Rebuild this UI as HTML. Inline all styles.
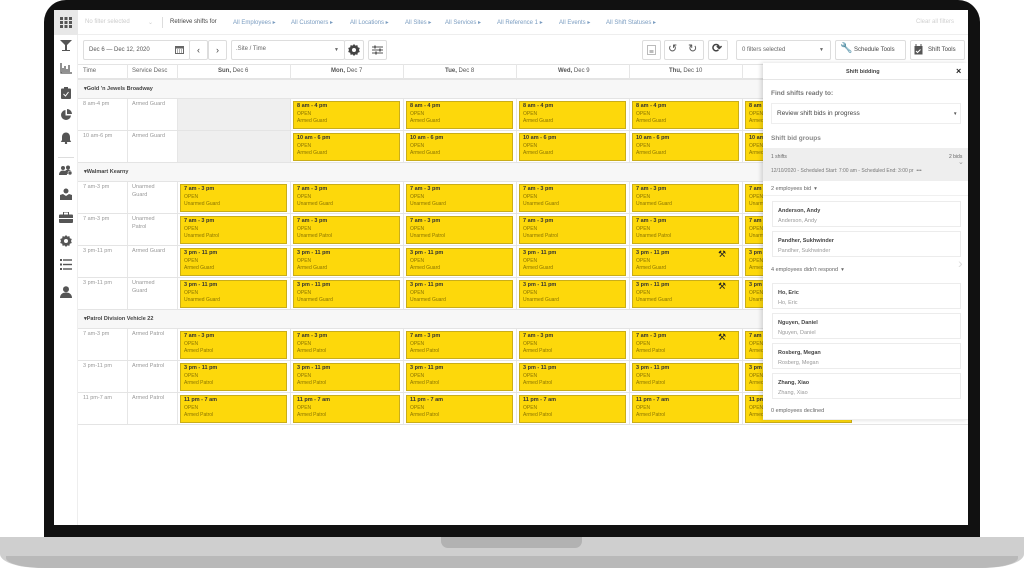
<!DOCTYPE html>
<html><head><meta charset="utf-8"><style>
*{margin:0;padding:0;box-sizing:border-box}
body{width:1024px;height:568px;background:#fff;position:relative;overflow:hidden;font-family:"Liberation Sans",sans-serif;color:#666}
.a{position:absolute}
#bez{left:44px;top:0;width:936px;height:538px;background:#111;border-radius:22px 22px 0 0}
#base{left:0;top:537px;width:1024px;height:31px;background:#cfcfcf;border-radius:0 0 40px 40px/0 0 14px 14px}
#base2{left:6px;top:556px;width:1012px;height:12px;background:#b9b9b9;border-radius:0 0 40px 40px/0 0 10px 10px}
#notch{left:441px;top:537px;width:141px;height:11px;background:#b2b2b2;border-radius:0 0 7px 7px}
#scr{left:54px;top:10px;width:914px;height:515px;background:#fff;overflow:hidden}
.t{position:absolute;white-space:nowrap;font-size:6px}
.lnk{color:#7a9cc0}
.box{position:absolute;border:1px solid #ddd;background:#fff;border-radius:2px}
.c{position:absolute;width:107px;height:28px;background:#fdd80b;border:1px solid #c9ad1a;font-size:5px;line-height:7.6px;padding:1px 3px;color:#8a7400}
.c b{color:#333;font-size:5.5px}
.hl{position:absolute;height:1px;background:#e4e4e4;left:24px;width:890px}
.vl{position:absolute;width:1px;background:#e6e6e6}
.g{position:absolute;left:24px;width:890px;height:19px;background:#f7f7f7;font-size:5.5px;font-weight:bold;color:#444;padding:6px 6px;border-top:1px solid #e4e4e4}
.rt{position:absolute;font-size:5.5px;color:#999;line-height:8px}
.pc{position:absolute;left:9px;width:189px;height:26px;border:1px solid #ececec;background:#fff;padding:4px 5px;font-size:5.5px;line-height:10px}
.pc b{color:#444}
.pc span{color:#999}
</style></head><body>
<div class="a" id="bez"></div>
<div class="a" id="base"></div><div class="a" id="base2"></div><div class="a" id="notch"></div>
<div class="a" id="scr">
 <!-- sidebar -->
 <div class="a" style="left:0;top:0;width:24px;height:515px;background:#fff;border-right:1px solid #eee"></div>
 <div class="a" style="left:0;top:0;width:24px;height:25px;background:#e8e8e8"></div>
 <svg class="a" style="left:6px;top:7px" width="12" height="11" viewBox="0 0 12 11"><g fill="#555"><rect x="0" y="0" width="3" height="3"/><rect x="4.5" y="0" width="3" height="3"/><rect x="9" y="0" width="3" height="3"/><rect x="0" y="4" width="3" height="3"/><rect x="4.5" y="4" width="3" height="3"/><rect x="9" y="4" width="3" height="3"/><rect x="0" y="8" width="3" height="3"/><rect x="4.5" y="8" width="3" height="3"/><rect x="9" y="8" width="3" height="3"/></g></svg>
 <svg class="a" style="left:6px;top:30px" width="12" height="11"><path d="M0 0h12L7 5v5h3v1H2v-1h3V5z" fill="#555"/></svg>
 <svg class="a" style="left:6px;top:53px" width="12" height="11"><path d="M1 0v10h11" stroke="#555" fill="none" stroke-width="1.3"/><path d="M3 9V5M5 9V3M7 9V6M9 9V2" stroke="#555" stroke-width="1.3"/></svg>
 <svg class="a" style="left:7px;top:77px" width="10" height="12"><rect x="0" y="1.5" width="10" height="10.5" rx="1" fill="#555"/><rect x="3" y="0" width="4" height="3" fill="#555"/><path d="M2.5 7l2 2 3-4" stroke="#fff" fill="none"/></svg>
 <svg class="a" style="left:6px;top:99px" width="12" height="12"><path d="M5.5 1A5 5 0 1 0 11 6.5H5.5z" fill="#555"/><path d="M7 0v5h5A5 5 0 0 0 7 0z" fill="#555"/></svg>
 <svg class="a" style="left:6px;top:122px" width="12" height="12"><path d="M6 0.5c-2.5 0-4 2-4 4.5v3L0.8 10h10.4L10 8V5c0-2.5-1.5-4.5-4-4.5z" fill="#555"/><circle cx="6" cy="11" r="1.2" fill="#555"/></svg>
 <div class="a" style="left:4px;top:147px;width:16px;height:1px;background:#ddd"></div>
 <svg class="a" style="left:5px;top:155px" width="14" height="11"><circle cx="4" cy="3" r="2" fill="#555"/><circle cx="9" cy="2.5" r="2" fill="#555"/><path d="M0 10c0-3 2-4.5 4-4.5s4 1.5 4 4.5zM6 6c1-1 2-1.5 3-1.5 2 0 4 1.5 4 4.5H8" fill="#555"/><circle cx="11" cy="8" r="2" fill="#555" stroke="#fff" stroke-width=".6"/></svg>
 <svg class="a" style="left:5px;top:178px" width="14" height="12"><circle cx="7" cy="3" r="2.5" fill="#555"/><path d="M1 12V7l3-1 3 2 3-2 3 1v5z" fill="#555"/></svg>
 <svg class="a" style="left:5px;top:202px" width="14" height="11"><rect x="0" y="2.5" width="14" height="8.5" rx="1" fill="#555"/><rect x="4.5" y="0" width="5" height="3.5" fill="none" stroke="#555"/><rect x="0" y="6" width="14" height="1" fill="#fff"/></svg>
 <svg class="a" style="left:6px;top:225px" width="12" height="12"><path d="M6 0l1.4 1.6 2-.5.4 2.1 2 .8-.8 2 .8 2-2 .8-.4 2.1-2-.5L6 12l-1.4-1.6-2 .5-.4-2.1-2-.8.8-2-.8-2 2-.8.4-2.1 2 .5z" fill="#555"/><circle cx="6" cy="6" r="2" fill="#fff"/></svg>
 <svg class="a" style="left:6px;top:249px" width="12" height="11"><g fill="#555"><rect x="0" y="0" width="2" height="2"/><rect x="3" y="0.3" width="9" height="1.4"/><rect x="0" y="4.5" width="2" height="2"/><rect x="3" y="4.8" width="9" height="1.4"/><rect x="0" y="9" width="2" height="2"/><rect x="3" y="9.3" width="9" height="1.4"/></g></svg>
 <svg class="a" style="left:6px;top:276px" width="12" height="12"><circle cx="6" cy="3.2" r="3" fill="#555"/><path d="M0 12c0-4 3-5.5 6-5.5s6 1.5 6 5.5z" fill="#555"/></svg>

 <!-- filter bar -->
 <div class="a" style="left:24px;top:0;width:890px;height:25px;border-bottom:1px solid #eee"></div>
 <div class="t" style="left:31px;top:9px;color:#ccc">No filter selected</div>
 <div class="t" style="left:94px;top:9px;color:#ccc">⌄</div>
 <div class="a" style="left:108px;top:7px;width:1px;height:11px;background:#ddd"></div>
 <div class="t" style="left:116px;top:9px;color:#444">Retrieve shifts for</div>
 <div class="t lnk" style="left:179px;top:9px">All Employees ▸</div>
 <div class="t lnk" style="left:237px;top:9px">All Customers ▸</div>
 <div class="t lnk" style="left:296px;top:9px">All Locations ▸</div>
 <div class="t lnk" style="left:351px;top:9px">All Sites ▸</div>
 <div class="t lnk" style="left:391px;top:9px">All Services ▸</div>
 <div class="t lnk" style="left:443px;top:9px">All Reference 1 ▸</div>
 <div class="t lnk" style="left:505px;top:9px">All Events ▸</div>
 <div class="t lnk" style="left:552px;top:9px">All Shift Statuses ▸</div>
 <div class="t" style="left:862px;top:9px;color:#d0d0d0">Clear all filters</div>

 <!-- toolbar -->
 <div class="box" style="left:29px;top:30px;width:107px;height:20px"></div>
 <div class="t" style="left:35px;top:37px;color:#555">Dec 6 — Dec 12, 2020</div>
 <svg class="a" style="left:121px;top:35px" width="9" height="9"><rect x=".5" y="1.5" width="8" height="7" fill="none" stroke="#666"/><rect x=".5" y="1.5" width="8" height="2" fill="#666"/><path d="M2 5h1M4 5h1M6 5h1M2 7h1M4 7h1M6 7h1" stroke="#666"/></svg>
 <div class="box" style="left:135px;top:30px;width:19px;height:20px;font-size:9px;color:#444;text-align:center;line-height:18px">‹</div>
 <div class="box" style="left:154px;top:30px;width:19px;height:20px;font-size:9px;color:#444;text-align:center;line-height:18px">›</div>
 <div class="box" style="left:177px;top:30px;width:114px;height:20px"></div>
 <div class="t" style="left:182px;top:36px;color:#666">.Site / Time</div>
 <div class="t" style="left:280px;top:37px;color:#666;font-size:5px">▼</div>
 <div class="box" style="left:290px;top:30px;width:20px;height:20px"></div>
 <svg class="a" style="left:294px;top:34px" width="12" height="12" viewBox="0 0 12 12"><path d="M6 0l1.4 1.6 2-.5.4 2.1 2 .8-.8 2 .8 2-2 .8-.4 2.1-2-.5L6 12l-1.4-1.6-2 .5-.4-2.1-2-.8.8-2-.8-2 2-.8.4-2.1 2 .5z" fill="#444"/><circle cx="6" cy="6" r="2" fill="#fff"/></svg>
 <div class="box" style="left:314px;top:30px;width:19px;height:20px"></div>
 <svg class="a" style="left:318px;top:35px" width="11" height="10"><path d="M0 2h11M0 5h11M0 8h11" stroke="#555"/><path d="M3 0.5v3M8 3.5v3M4 6.5v3" stroke="#555" stroke-width="1.5"/></svg>
 <div class="box" style="left:588px;top:30px;width:19px;height:20px"></div>
 <svg class="a" style="left:593px;top:35px" width="9" height="10"><rect x=".5" y=".5" width="8" height="9" fill="none" stroke="#bbb"/><rect x="2.5" y="5" width="4" height="3" fill="#bbb"/></svg>
 <div class="box" style="left:610px;top:30px;width:40px;height:20px"></div>
 <div class="t" style="left:614px;top:32px;font-size:11px;color:#555">↺</div>
 <div class="t" style="left:634px;top:32px;font-size:11px;color:#555">↻</div>
 <div class="box" style="left:654px;top:30px;width:20px;height:20px"></div>
 <div class="t" style="left:658px;top:31px;font-size:12px;color:#444;font-weight:bold">⟳</div>
 <div class="box" style="left:682px;top:30px;width:95px;height:20px"></div>
 <div class="t" style="left:688px;top:37px;color:#666">0 filters selected</div>
 <div class="t" style="left:765px;top:37px;color:#666;font-size:5px">▼</div>
 <div class="box" style="left:781px;top:30px;width:71px;height:20px"></div>
 <div class="t" style="left:786px;top:33px;font-size:10px;color:#444">🔧</div>
 <div class="t" style="left:800px;top:37px;color:#444">Schedule Tools</div>
 <div class="box" style="left:856px;top:30px;width:55px;height:20px"></div>
 <svg class="a" style="left:860px;top:34px" width="9" height="11"><rect x=".5" y="2" width="8" height="8.5" fill="#555"/><path d="M2 0v3M7 0v3" stroke="#555"/><path d="M2 7l1.5 1.5 3-3" stroke="#fff" fill="none"/></svg>
 <div class="t" style="left:874px;top:37px;color:#444">Shift Tools</div>

 <!-- grid header -->
 <div class="a" style="left:24px;top:54px;width:890px;height:15px;border-top:1px solid #e4e4e4;border-bottom:1px solid #e4e4e4"></div>
 <div class="t" style="left:29px;top:58px">Time</div>
 <div class="t" style="left:78px;top:58px">Service Desc</div>
 <div class="t" style="left:164px;top:58px;color:#555"><b>Sun,</b> Dec 6</div>
 <div class="t" style="left:277px;top:58px;color:#555"><b>Mon,</b> Dec 7</div>
 <div class="t" style="left:391px;top:58px;color:#555"><b>Tue,</b> Dec 8</div>
 <div class="t" style="left:504px;top:58px;color:#555"><b>Wed,</b> Dec 9</div>
 <div class="t" style="left:615px;top:58px;color:#555"><b>Thu,</b> Dec 10</div>

 <div class="a" style="left:124px;top:88px;width:112px;height:64px;background:#efefef"></div>
 <!-- vertical lines -->
 <div class="vl" style="left:73px;top:54px;height:360px"></div>
 <div class="vl" style="left:123px;top:54px;height:360px"></div>
 <div class="vl" style="left:236px;top:54px;height:360px"></div>
 <div class="vl" style="left:349px;top:54px;height:360px"></div>
 <div class="vl" style="left:462px;top:54px;height:360px"></div>
 <div class="vl" style="left:575px;top:54px;height:360px"></div>
 <div class="vl" style="left:688px;top:54px;height:360px"></div>
 <!-- horizontal lines -->
 <div class="hl" style="top:120px"></div>
 <div class="hl" style="top:203px"></div><div class="hl" style="top:235px"></div><div class="hl" style="top:267px"></div>
 <div class="hl" style="top:350px"></div><div class="hl" style="top:382px"></div><div class="hl" style="top:414px"></div>
 <!-- group rows -->
 <div class="g" style="top:69px">▾Gold 'n Jewels Broadway</div>
 <div class="g" style="top:152px">▾Walmart Kearny</div>
 <div class="g" style="top:299px">▾Patrol Division Vehicle 22</div>
 <div class="hl" style="top:88px"></div><div class="hl" style="top:171px"></div><div class="hl" style="top:318px"></div>

 <!-- row labels -->
 <div class="rt" style="left:29px;top:90px">8 am-4 pm</div><div class="rt" style="left:78px;top:90px">Armed Guard</div>
 <div class="rt" style="left:29px;top:122px">10 am-6 pm</div><div class="rt" style="left:78px;top:122px">Armed Guard</div>
 <div class="rt" style="left:29px;top:173px">7 am-3 pm</div><div class="rt" style="left:78px;top:173px">Unarmed<br>Guard</div>
 <div class="rt" style="left:29px;top:205px">7 am-3 pm</div><div class="rt" style="left:78px;top:205px">Unarmed<br>Patrol</div>
 <div class="rt" style="left:29px;top:237px">3 pm-11 pm</div><div class="rt" style="left:78px;top:237px">Armed Guard</div>
 <div class="rt" style="left:29px;top:269px">3 pm-11 pm</div><div class="rt" style="left:78px;top:269px">Unarmed<br>Guard</div>
 <div class="rt" style="left:29px;top:320px">7 am-3 pm</div><div class="rt" style="left:78px;top:320px">Armed Patrol</div>
 <div class="rt" style="left:29px;top:352px">3 pm-11 pm</div><div class="rt" style="left:78px;top:352px">Armed Patrol</div>
 <div class="rt" style="left:29px;top:384px">11 pm-7 am</div><div class="rt" style="left:78px;top:384px">Armed Patrol</div>

 <!-- cards: Gold -->
 <div class="c" style="left:239px;top:91px"><b>8 am - 4 pm</b><br>OPEN<br>Armed Guard</div>
 <div class="c" style="left:352px;top:91px"><b>8 am - 4 pm</b><br>OPEN<br>Armed Guard</div>
 <div class="c" style="left:465px;top:91px"><b>8 am - 4 pm</b><br>OPEN<br>Armed Guard</div>
 <div class="c" style="left:578px;top:91px"><b>8 am - 4 pm</b><br>OPEN<br>Armed Guard</div>
 <div class="c" style="left:691px;top:91px"><b>8 am - 4 pm</b><br>OPEN<br>Armed Guard</div>
 <div class="c" style="left:239px;top:123px"><b>10 am - 6 pm</b><br>OPEN<br>Armed Guard</div>
 <div class="c" style="left:352px;top:123px"><b>10 am - 6 pm</b><br>OPEN<br>Armed Guard</div>
 <div class="c" style="left:465px;top:123px"><b>10 am - 6 pm</b><br>OPEN<br>Armed Guard</div>
 <div class="c" style="left:578px;top:123px"><b>10 am - 6 pm</b><br>OPEN<br>Armed Guard</div>
 <div class="c" style="left:691px;top:123px"><b>10 am - 6 pm</b><br>OPEN<br>Armed Guard</div>
 <!-- Walmart -->
 <div class="c" style="left:126px;top:174px"><b>7 am - 3 pm</b><br>OPEN<br>Unarmed Guard</div>
 <div class="c" style="left:239px;top:174px"><b>7 am - 3 pm</b><br>OPEN<br>Unarmed Guard</div>
 <div class="c" style="left:352px;top:174px"><b>7 am - 3 pm</b><br>OPEN<br>Unarmed Guard</div>
 <div class="c" style="left:465px;top:174px"><b>7 am - 3 pm</b><br>OPEN<br>Unarmed Guard</div>
 <div class="c" style="left:578px;top:174px"><b>7 am - 3 pm</b><br>OPEN<br>Unarmed Guard</div>
 <div class="c" style="left:691px;top:174px"><b>7 am - 3 pm</b><br>OPEN<br>Unarmed Guard</div>
 <div class="c" style="left:126px;top:206px"><b>7 am - 3 pm</b><br>OPEN<br>Unarmed Patrol</div>
 <div class="c" style="left:239px;top:206px"><b>7 am - 3 pm</b><br>OPEN<br>Unarmed Patrol</div>
 <div class="c" style="left:352px;top:206px"><b>7 am - 3 pm</b><br>OPEN<br>Unarmed Patrol</div>
 <div class="c" style="left:465px;top:206px"><b>7 am - 3 pm</b><br>OPEN<br>Unarmed Patrol</div>
 <div class="c" style="left:578px;top:206px"><b>7 am - 3 pm</b><br>OPEN<br>Unarmed Patrol</div>
 <div class="c" style="left:691px;top:206px"><b>7 am - 3 pm</b><br>OPEN<br>Unarmed Patrol</div>
 <div class="c" style="left:126px;top:238px"><b>3 pm - 11 pm</b><br>OPEN<br>Armed Guard</div>
 <div class="c" style="left:239px;top:238px"><b>3 pm - 11 pm</b><br>OPEN<br>Armed Guard</div>
 <div class="c" style="left:352px;top:238px"><b>3 pm - 11 pm</b><br>OPEN<br>Armed Guard</div>
 <div class="c" style="left:465px;top:238px"><b>3 pm - 11 pm</b><br>OPEN<br>Armed Guard</div>
 <div class="c" style="left:578px;top:238px"><b>3 pm - 11 pm</b><br>OPEN<br>Armed Guard</div>
 <div class="c" style="left:691px;top:238px"><b>3 pm - 11 pm</b><br>OPEN<br>Armed Guard</div>
 <div class="c" style="left:126px;top:270px"><b>3 pm - 11 pm</b><br>OPEN<br>Unarmed Guard</div>
 <div class="c" style="left:239px;top:270px"><b>3 pm - 11 pm</b><br>OPEN<br>Unarmed Guard</div>
 <div class="c" style="left:352px;top:270px"><b>3 pm - 11 pm</b><br>OPEN<br>Unarmed Guard</div>
 <div class="c" style="left:465px;top:270px"><b>3 pm - 11 pm</b><br>OPEN<br>Unarmed Guard</div>
 <div class="c" style="left:578px;top:270px"><b>3 pm - 11 pm</b><br>OPEN<br>Unarmed Guard</div>
 <div class="c" style="left:691px;top:270px"><b>3 pm - 11 pm</b><br>OPEN<br>Unarmed Guard</div>
 <!-- Patrol -->
 <div class="c" style="left:126px;top:321px"><b>7 am - 3 pm</b><br>OPEN<br>Armed Patrol</div>
 <div class="c" style="left:239px;top:321px"><b>7 am - 3 pm</b><br>OPEN<br>Armed Patrol</div>
 <div class="c" style="left:352px;top:321px"><b>7 am - 3 pm</b><br>OPEN<br>Armed Patrol</div>
 <div class="c" style="left:465px;top:321px"><b>7 am - 3 pm</b><br>OPEN<br>Armed Patrol</div>
 <div class="c" style="left:578px;top:321px"><b>7 am - 3 pm</b><br>OPEN<br>Armed Patrol</div>
 <div class="c" style="left:691px;top:321px"><b>7 am - 3 pm</b><br>OPEN<br>Armed Patrol</div>
 <div class="c" style="left:126px;top:353px"><b>3 pm - 11 pm</b><br>OPEN<br>Armed Patrol</div>
 <div class="c" style="left:239px;top:353px"><b>3 pm - 11 pm</b><br>OPEN<br>Armed Patrol</div>
 <div class="c" style="left:352px;top:353px"><b>3 pm - 11 pm</b><br>OPEN<br>Armed Patrol</div>
 <div class="c" style="left:465px;top:353px"><b>3 pm - 11 pm</b><br>OPEN<br>Armed Patrol</div>
 <div class="c" style="left:578px;top:353px"><b>3 pm - 11 pm</b><br>OPEN<br>Armed Patrol</div>
 <div class="c" style="left:691px;top:353px"><b>3 pm - 11 pm</b><br>OPEN<br>Armed Patrol</div>
 <div class="c" style="left:126px;top:385px"><b>11 pm - 7 am</b><br>OPEN<br>Armed Patrol</div>
 <div class="c" style="left:239px;top:385px"><b>11 pm - 7 am</b><br>OPEN<br>Armed Patrol</div>
 <div class="c" style="left:352px;top:385px"><b>11 pm - 7 am</b><br>OPEN<br>Armed Patrol</div>
 <div class="c" style="left:465px;top:385px"><b>11 pm - 7 am</b><br>OPEN<br>Armed Patrol</div>
 <div class="c" style="left:578px;top:385px"><b>11 pm - 7 am</b><br>OPEN<br>Armed Patrol</div>
 <div class="c" style="left:691px;top:385px"><b>11 pm - 7 am</b><br>OPEN<br>Armed Patrol</div>
 <!-- gavel icons -->
 <div class="t" style="left:664px;top:239px;font-size:9px;color:#222">⚒</div>
 <div class="t" style="left:664px;top:271px;font-size:9px;color:#222">⚒</div>
 <div class="t" style="left:664px;top:322px;font-size:9px;color:#222">⚒</div>

 <!-- side panel -->
 <div class="a" style="left:709px;top:53px;width:205px;height:357px;background:#fff;box-shadow:-2px 0 4px rgba(0,0,0,.15);border-bottom:1px solid #eee">
  <div class="a" style="left:0;top:0;width:205px;height:17px;border-bottom:1px solid #e6e6e6"></div>
  <div class="t" style="left:83px;top:6px;font-size:5.5px;color:#444;font-weight:bold">Shift bidding</div>
  <div class="t" style="left:193px;top:3px;font-size:9px;color:#222;font-weight:bold">×</div>
  <div class="t" style="left:8px;top:27px;font-size:6.5px;color:#777;font-weight:bold">Find shifts ready to:</div>
  <div class="a" style="left:8px;top:40px;width:190px;height:21px;border:1px solid #eee"></div>
  <div class="t" style="left:14px;top:47px;font-size:6.5px;color:#444">Review shift bids in progress</div>
  <div class="t" style="left:190px;top:48px;font-size:4.5px;color:#555">▼</div>
  <div class="t" style="left:8px;top:72px;font-size:6.5px;color:#888;font-weight:bold">Shift bid groups</div>
  <div class="a" style="left:0;top:85px;width:205px;height:33px;background:#eeeeee"></div>
  <div class="t" style="left:8px;top:91px;font-size:5px;color:#666">1 shifts</div>
  <div class="t" style="left:186px;top:91px;font-size:5px;color:#666">2 bids</div>
  <div class="t" style="left:8px;top:105px;font-size:5px;color:#777">12/10/2020 - Scheduled Start: 7:00 am - Scheduled End: 3:00 pr &nbsp;•••</div>
  <div class="t" style="left:195px;top:95px;font-size:7px;color:#999">⌄</div>
  <div class="t" style="left:8px;top:123px;font-size:5.5px;color:#666">2 employees bid &nbsp;▾</div>
  <div class="a" style="left:0;top:132px;width:205px;height:1px;background:#f0f0f0"></div>
  <div class="pc" style="top:138px"><b>Anderson, Andy</b><br><span>Anderson, Andy</span></div>
  <div class="pc" style="top:168px"><b>Pandher, Sukhwinder</b><br><span>Pandher, Sukhwinder</span></div>
  <div class="t" style="left:8px;top:204px;font-size:5.5px;color:#666">4 employees didn't respond &nbsp;▾</div>
  <div class="pc" style="top:220px"><b>Ho, Eric</b><br><span>Ho, Eric</span></div>
  <div class="pc" style="top:250px"><b>Nguyen, Daniel</b><br><span>Nguyen, Daniel</span></div>
  <div class="pc" style="top:280px"><b>Rosberg, Megan</b><br><span>Rosberg, Megan</span></div>
  <div class="pc" style="top:310px"><b>Zhang, Xiao</b><br><span>Zhang, Xiao</span></div>
  <div class="t" style="left:8px;top:345px;font-size:5.5px;color:#666">0 employees declined</div>
  <div class="t" style="left:195px;top:192px;font-size:14px;color:#ddd">›</div>
 </div>
</div>
</body></html>
